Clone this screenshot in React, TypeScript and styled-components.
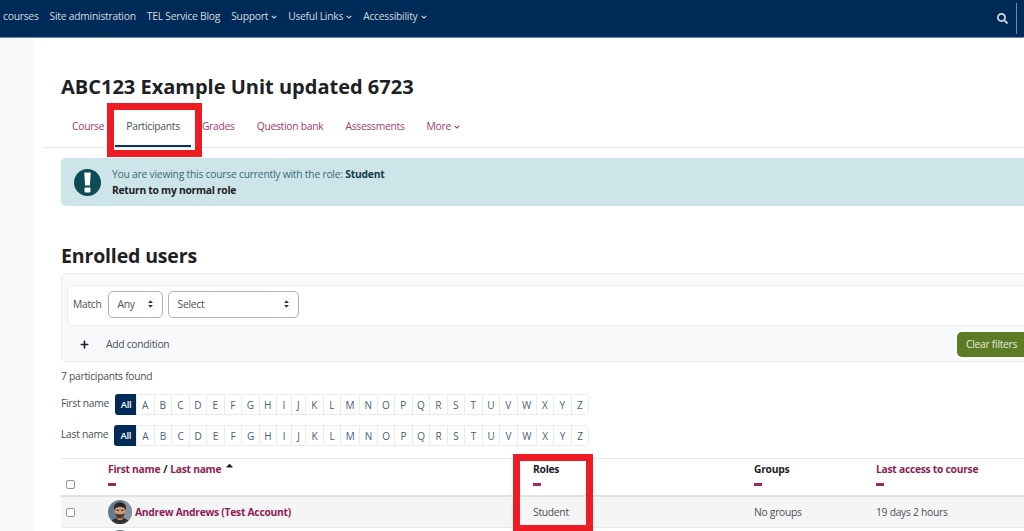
import React from 'react'
import styled, { createGlobalStyle } from 'styled-components';
import { FaSearch, FaPlus, FaCaretUp } from 'react-icons/fa';

const LETTERS = 'ABCDEFGHIJKLMNOPQRSTUVWXYZ'.split('');
const FONT = `"Open Sans", "Noto Sans", sans-serif`;

const GlobalStyle = createGlobalStyle`
    html, body {
        margin: 0;
        padding: 0;
        background: #fff;
        overflow: hidden;
    }
    * {
        box-sizing: border-box;
    }
`

const Chevron = () => (
    <ChevronIcon viewBox="0 0 10 6">
        <path d="M1.2 1.2 5 4.8 8.8 1.2" fill="none" stroke="currentColor" strokeWidth="1.8" />
    </ChevronIcon>
)

const SelectArrows = () => (
    <ArrowsIcon viewBox="0 0 6 9">
        <path d="M3 0 6 3.4H0zM3 9 0 5.6H6z" fill="#343a40" />
    </ArrowsIcon>
)

const AlertGlyph = () => (
    <AlertIcon viewBox="0 0 27 27">
        <circle cx="13.500" cy="13.500" r="13.500" fill="#0d4b57" />
        <path d="M10.300 3.500h6.400l-.8 13h-4.800z" fill="#fff" />
        <rect x="10.500" y="18.500" width="6" height="5" rx="1" fill="#fff" />
    </AlertIcon>
)

const Avatar = () => (
    <AvatarIcon viewBox="0 0 24 24">
        <defs>
            <clipPath id="avatar-clip"><circle cx="12" cy="12" r="12" /></clipPath>
        </defs>
        <g clipPath="url(#avatar-clip)">
            <rect width="24" height="24" fill="#66798b" />
            <rect x="16" width="8" height="24" fill="#8593a3" />
            <path d="M2 24c1-5 5-6 10-6s9 1 10 6z" fill="#33302f" />
            <rect x="9.500" y="15" width="5" height="5" fill="#b5835f" />
            <ellipse cx="12" cy="11" rx="5.500" ry="7" fill="#cd9c78" />
            <path d="M7 12.500c.6 4 2.400 5.800 5 5.800s4.400-1.800 5-5.800c-1 1.500-2.600 1.800-5 1.800s-4-.3-5-1.800z" fill="#4a3829" />
            <path d="M6.200 10.500C5 4.500 8.500 2.500 12 2.500s7 2 5.800 8c-.8-2.600-3-3.700-5.800-3.700s-5 1.100-5.800 3.700z" fill="#2b221d" />
            <path d="M8.300 10.300h2.800M12.900 10.300h2.800" stroke="#2b221d" strokeWidth="1" />
        </g>
    </AvatarIcon>
)

const InitialsBar: React.FC<{ label: string; allWidth: number }> = ({ label, allWidth }) => (
    <InitialsRow>
        <InitialsLabel>{label}</InitialsLabel>
        <InitialsGroup>
            <InitialAll $width={allWidth}>All</InitialAll>
            {LETTERS.map((letter) => (
                <Initial key={letter} $wide={letter === 'M' || letter === 'W'} $narrow={letter === 'I' || letter === 'J'}>{letter}</Initial>
            ))}
        </InitialsGroup>
    </InitialsRow>
)

const App: React.FC = () => {
    return (
        <Page>
            <GlobalStyle />
            <NavBar>
                <NavLink>courses</NavLink>
                <NavLink>Site administration</NavLink>
                <NavLink>TEL Service Blog</NavLink>
                <NavLink>Support <Chevron /></NavLink>
                <NavLink>Useful Links <Chevron /></NavLink>
                <NavLink>Accessibility <Chevron /></NavLink>
                <NavSearch><FaSearch /></NavSearch>
            </NavBar>
            <Body>
                <SideStrip />
                <Main>
                    <Title>ABC123 Example Unit updated 6723</Title>
                    <Tabs>
                        <Tab>Course</Tab>
                        <Tab $active>Participants</Tab>
                        <Tab>Grades</Tab>
                        <Tab>Question bank</Tab>
                        <Tab>Assessments</Tab>
                        <Tab>More <Chevron /></Tab>
                    </Tabs>
                    <Alert>
                        <AlertGlyph />
                        <AlertText>
                            <div>You are viewing this course currently with the role: <b>Student</b></div>
                            <AlertLink>Return to my normal role</AlertLink>
                        </AlertText>
                    </Alert>
                    <Heading>Enrolled users</Heading>
                    <FilterPanel>
                        <FilterRow>
                            <FilterLabel>Match</FilterLabel>
                            <SelectBox $width={55}>Any <SelectArrows /></SelectBox>
                            <SelectBox $width={131}>Select <SelectArrows /></SelectBox>
                        </FilterRow>
                        <FilterActions>
                            <AddCondition>
                                <PlusIcon><FaPlus /></PlusIcon>
                                Add condition
                            </AddCondition>
                            <ClearButton>Clear filters</ClearButton>
                        </FilterActions>
                    </FilterPanel>
                    <FoundText>7 participants found</FoundText>
                    <InitialsBar label="First name" allWidth={22} />
                    <InitialsBar label="Last name" allWidth={23} />
                    <Table>
                        <HeadRow>
                            <CheckCell><Checkbox /></CheckCell>
                            <NameCell>
                                <HeadLabel>
                                    <HeadLink>First name</HeadLink> / <HeadLink>Last name</HeadLink>
                                    <SortIcon><FaCaretUp /></SortIcon>
                                </HeadLabel>
                                <Dash />
                            </NameCell>
                            <RoleCell>
                                <HeadLabel>Roles</HeadLabel>
                                <Dash />
                            </RoleCell>
                            <GroupCell>
                                <HeadLabel>Groups</HeadLabel>
                                <Dash />
                            </GroupCell>
                            <AccessCell>
                                <HeadLabel><HeadLink>Last access to course</HeadLink></HeadLabel>
                                <Dash />
                            </AccessCell>
                        </HeadRow>
                        <DataRow>
                            <CheckCell><Checkbox /></CheckCell>
                            <NameCell>
                                <UserLink><Avatar />Andrew Andrews (Test Account)</UserLink>
                            </NameCell>
                            <RoleCell>Student</RoleCell>
                            <GroupCell>No groups</GroupCell>
                            <AccessCell>19 days 2 hours</AccessCell>
                        </DataRow>
                        <NextRow>
                            <CheckCell />
                            <NameCell><Avatar /></NameCell>
                        </NextRow>
                    </Table>
                </Main>
            </Body>
            <Highlight $left={107} $top={103} $width={95} $height={54} />
            <Highlight $left={513} $top={454} $width={80} $height={78} />
        </Page>
    )
}

const Page = styled.div`
    position: relative;
    width: 1024px;
    height: 531px;
    overflow: hidden;
    font-family: ${FONT};
    font-size: 10.3px;
    letter-spacing: -0.27px;
    color: #495057;
`
const NavBar = styled.div`
    display: flex;
    align-items: center;
    gap: 11px;
    height: 38px;
    padding: 0 7px 5px 3px;
    background: #002b59;
    border-bottom: 1px solid #6f8aa6;
    letter-spacing: -0.24px;
`
const NavLink = styled.div`
    display: flex;
    align-items: center;
    gap: 3px;
    color: #d3d9df;
    white-space: nowrap;
`
const ChevronIcon = styled.svg`
    width: 6px;
    height: 4px;
    margin-top: 1px;
`
const NavSearch = styled.div`
    display: flex;
    align-items: center;
    height: 31px;
    margin-left: auto;
    margin-top: 5px;
    padding-right: 8px;
    border-right: 1px solid #6f8aa6;
    color: #d0d6dc;
    font-size: 11px;
`
const Body = styled.div`
    display: flex;
    height: 493px;
`
const SideStrip = styled.div`
    flex: 0 0 33px;
    background: #f8f9fa;
`
const Main = styled.div`
    flex: 0 0 1100px;
    padding: 35px 0 0 28px;
`
const Title = styled.h1`
    margin: 0;
    height: 28px;
    color: #1d2125;
    font-size: 20px;
    line-height: 28px;
    font-weight: 700;
    letter-spacing: 0;
    white-space: nowrap;
`
const Tabs = styled.div`
    display: flex;
    height: 47px;
    margin: 0 0 10px -17px;
    padding-left: 17px;
    border-bottom: 1px solid #e6e8ea;
`
const Tab = styled.div<{ $active?: boolean }>`
    display: flex;
    align-items: center;
    gap: 3px;
    height: 46px;
    padding: 6px 11px 0;
    border-bottom: 2px solid ${({ $active }) => ($active ? '#0f2f5c' : 'transparent')};
    color: ${({ $active }) => ($active ? '#495057' : '#a23a6d')};
    white-space: nowrap;
`
const Alert = styled.div`
    display: flex;
    align-items: center;
    gap: 11px;
    height: 48px;
    padding-left: 13px;
    background: #cde5e9;
    border-radius: 5px;
    color: #3a6c78;
`
const AlertIcon = styled.svg`
    flex: none;
    width: 27px;
    height: 27px;
`
const AlertText = styled.div`
    line-height: 16px;
    letter-spacing: -0.22px;
    b {
        color: #143a4a;
        font-weight: 700;
    }
`
const AlertLink = styled.div`
    color: #1d2125;
    font-weight: 700;
    letter-spacing: -0.27px;
`
const Heading = styled.h2`
    margin: 36px 0 0;
    height: 31px;
    color: #1d2125;
    font-size: 19.500px;
    line-height: 28px;
    font-weight: 700;
    letter-spacing: -0.15px;
`
const FilterPanel = styled.div`
    height: 89px;
    padding: 11px 0 0 5px;
    background: #f8f9fa;
    border: 1px solid #e9ecef;
    border-radius: 5px;
`
const FilterRow = styled.div`
    display: flex;
    align-items: center;
    gap: 5px;
    height: 41px;
    padding: 0 0 3px 5px;
    background: #fff;
    border: 1px solid #e9ecef;
    border-radius: 5px;
`
const FilterLabel = styled.div`
    margin-right: 1px;
    color: #495057;
`
const SelectBox = styled.div<{ $width: number }>`
    display: flex;
    align-items: center;
    justify-content: space-between;
    width: ${({ $width }) => $width}px;
    height: 27px;
    padding: 0 9px;
    background: #fff;
    border: 1px solid #aeb4ba;
    border-radius: 5px;
`
const ArrowsIcon = styled.svg`
    width: 5px;
    height: 8px;
`
const FilterActions = styled.div`
    display: flex;
    align-items: center;
    justify-content: space-between;
    height: 36px;
    padding: 0 95px 0 13px;
`
const AddCondition = styled.div`
    display: flex;
    align-items: center;
    gap: 17px;
`
const PlusIcon = styled.span`
    display: flex;
    color: #1d2125;
    font-size: 9px;
`
const ClearButton = styled.div`
    display: flex;
    align-items: center;
    width: 80px;
    height: 25px;
    padding-left: 9px;
    background: #5b7b24;
    border-radius: 5px;
    color: #e7ecdc;
`
const FoundText = styled.div`
    height: 29px;
    padding-top: 7px;
    line-height: 14px;
`
const InitialsRow = styled.div`
    display: flex;
    align-items: flex-start;
    gap: 6px;
    height: 31px;
    padding-top: 3px;
`
const InitialsLabel = styled.div`
    margin-top: 1px;
    line-height: 16px;
    white-space: nowrap;
`
const InitialsGroup = styled.div`
    display: flex;
    height: 21px;
`
const Initial = styled.div<{ $wide?: boolean; $narrow?: boolean }>`
    display: flex;
    align-items: center;
    justify-content: center;
    width: ${({ $wide, $narrow }) => ($wide ? 20 : $narrow ? 15.500 : 18.500)}px;
    margin-left: -1px;
    background: #fff;
    border: 1px solid #e9ecef;
    color: #4a6078;
    font-size: 10px;
    letter-spacing: 0;
    &:last-child {
        border-radius: 0 3px 3px 0;
    }
`
const InitialAll = styled.div<{ $width: number }>`
    display: flex;
    align-items: center;
    justify-content: center;
    width: ${({ $width }) => $width}px;
    background: #002b59;
    border-radius: 3px 0 0 3px;
    color: #fff;
    font-size: 9.500px;
    font-weight: 600;
`
const Table = styled.div`
    margin-top: 5px;
    border-top: 1px solid #e6e8ea;
`
const HeadRow = styled.div`
    display: flex;
    height: 38px;
    border-bottom: 2px solid #dfe2e5;
`
const DataRow = styled.div`
    display: flex;
    align-items: center;
    height: 31px;
    background: #f5f5f5;
    border-bottom: 1px solid #e6e8ea;
`
const NextRow = styled.div`
    display: flex;
    padding-top: 2px;
`
const CheckCell = styled.div`
    display: flex;
    align-items: flex-end;
    flex: 0 0 47px;
    padding: 0 0 6px 5px;
    ${DataRow} & {
        padding-bottom: 0;
        align-items: center;
    }
`
const Checkbox = styled.div`
    width: 9px;
    height: 9px;
    background: #fff;
    border: 1px solid #8f959b;
    border-radius: 2px;
`
const NameCell = styled.div`
    flex: 0 0 425px;
`
const RoleCell = styled.div`
    flex: 0 0 221px;
`
const GroupCell = styled.div`
    flex: 0 0 122px;
`
const AccessCell = styled.div`
    flex: 1;
`
const HeadLabel = styled.div`
    display: flex;
    gap: 3px;
    height: 19px;
    padding-top: 3px;
    color: #1d2125;
    font-weight: 700;
    line-height: 15px;
    white-space: nowrap;
`
const HeadLink = styled.span`
    color: #8f1d56;
    font-weight: 700;
`
const SortIcon = styled.span`
    margin: -3px 0 0 0;
    color: #1d2125;
    font-size: 11px;
`
const Dash = styled.div`
    width: 8px;
    height: 2.500px;
    margin-top: 5px;
    background: #9c2a62;
`
const UserLink = styled.div`
    display: flex;
    align-items: center;
    gap: 3px;
    color: #8f1d56;
    font-weight: 700;
    white-space: nowrap;
`
const AvatarIcon = styled.svg`
    flex: none;
    width: 24px;
    height: 24px;
`
const Highlight = styled.div<{ $left: number; $top: number; $width: number; $height: number }>`
    position: absolute;
    left: ${({ $left }) => $left}px;
    top: ${({ $top }) => $top}px;
    width: ${({ $width }) => $width}px;
    height: ${({ $height }) => $height}px;
    border: 7px solid #ed1c24;
    pointer-events: none;
`

export default App;
